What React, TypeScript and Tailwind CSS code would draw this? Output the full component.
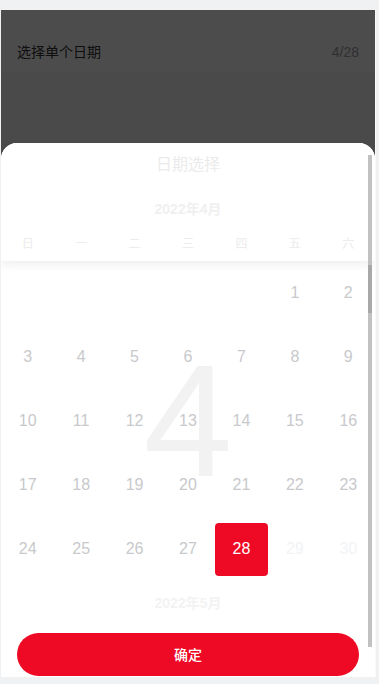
import * as React from "react";

const weekdays = ["日", "一", "二", "三", "四", "五", "六"];

const april: (number | null)[] = [
  null, null, null, null, null, 1, 2,
  ...Array.from({ length: 28 }, (_, i) => i + 3),
];

function Day({ n }: { n: number | null }) {
  if (n === null) return <div className="h-16" />;
  if (n === 28) {
    return (
      <div className="h-16 flex items-center justify-center">
        <div className="w-[53px] h-[53px] rounded-[4px] bg-[#ee0a24] text-white flex items-center justify-center">
          {n}
        </div>
      </div>
    );
  }
  const disabled = n > 28;
  return (
    <div
      className={
        "h-16 flex items-center justify-center " +
        (disabled ? "text-[#f2f3f5]" : "text-[#c8c9cc]")
      }
    >
      {n}
    </div>
  );
}

export default function App() {
  return (
    <div
      className="h-[684px] bg-[#f0f1f3] pt-[10px] pl-[1px] pr-[3px] pb-[7px]"
      style={{ fontFamily: '"Liberation Sans", "Noto Sans CJK SC", sans-serif' }}
    >
      <div className="relative h-full overflow-hidden bg-[#f7f8fa] border-r border-[#fafafa]">
        <div className="bg-white h-[62px] px-4 pt-[30px] flex justify-between text-sm leading-6">
          <span className="text-[#323233]">选择单个日期</span>
          <span className="text-[#a0a1a3]">4/28</span>
        </div>

        <div className="absolute inset-0 bg-black/70" />

        <div className="absolute left-0 right-0 bottom-0 h-[534px] bg-white rounded-t-2xl flex flex-col overflow-hidden">
          <div className="relative z-10 shadow-[0_2px_10px_rgba(125,126,128,0.16)] bg-white">
            <div className="h-11 flex items-center justify-center text-base text-[#ebebeb]">
              日期选择
            </div>
            <div className="h-11 flex items-center justify-center text-sm font-semibold text-[#f0f0f0]">
              2022年4月
            </div>
            <div className="h-[30px] pb-[4px] grid grid-cols-7 text-xs text-[#ececec] items-center">
              {weekdays.map((w) => (
                <div key={w} className="text-center">
                  {w}
                </div>
              ))}
            </div>
          </div>

          <div className="relative flex-1">
            <div className="relative">
              <div className="absolute inset-0 flex items-center justify-center text-[160px] text-[#f2f2f3] pointer-events-none leading-none">
                4
              </div>
              <div className="relative grid grid-cols-7 text-base">
                {april.map((n, i) => (
                  <Day key={i} n={n} />
                ))}
              </div>
            </div>
            <div className="h-11 flex items-center justify-center text-sm font-semibold text-[#f3f3f3]">
              2022年5月
            </div>
          </div>

          <div className="absolute left-0 right-0 bottom-0 px-4 pb-[1px]">
            <button className="w-full h-[43px] rounded-full bg-[#ee0a24] text-white text-sm font-medium">
              确定
            </button>
          </div>

          <div className="absolute z-20 right-[3px] top-[12px] h-[492px] w-[4px] bg-[#c1c1c1]">
            <div className="mt-[110px] h-[48px] bg-[#a8a8a8]" />
          </div>
        </div>
      </div>
    </div>
  );
}
